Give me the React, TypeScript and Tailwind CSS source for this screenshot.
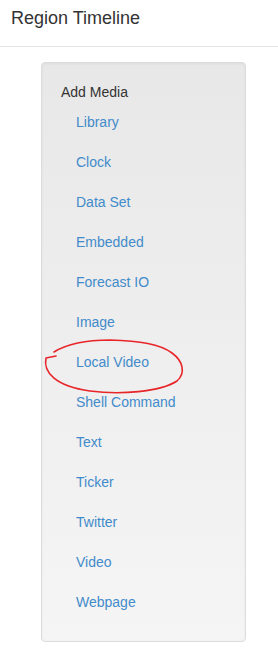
import React from "react";

const items = [
  "Library",
  "Clock",
  "Data Set",
  "Embedded",
  "Forecast IO",
  "Image",
  "Local Video",
  "Shell Command",
  "Text",
  "Ticker",
  "Twitter",
  "Video",
  "Webpage",
];

export default function App() {
  return (
    <div
      className="relative w-[278px] h-[663px] bg-white text-[#333]"
      style={{ fontFamily: '"Liberation Sans", Arial, sans-serif' }}
    >
      <div className="h-[47px] border-b border-[#e5e5e5] pl-[11px] pt-[8px]">
        <h4 className="text-[18px] leading-[20px] font-normal text-[#333]">Region Timeline</h4>
      </div>
      <div className="mt-[15px] ml-[41px] w-[205px] rounded-[4px] border border-[#dcdcdc] bg-gradient-to-b from-[#e8e8e8] to-[#f5f5f5] p-[19px] shadow-[inset_0_1px_3px_rgba(0,0,0,0.05)]">
        <div className="text-[14px] leading-[20px] text-[#333]">Add Media</div>
        <ul className="flex flex-col">
          {items.map((it) => (
            <li key={it}>
              <a className="block px-[15px] py-[10px] text-[14px] leading-[20px] text-[#428bca]" href="#">
                {it}
              </a>
            </li>
          ))}
        </ul>
      </div>
      <svg
        className="pointer-events-none absolute left-0 top-0"
        width="278"
        height="663"
        viewBox="0 0 278 663"
        fill="none"
      >
        <path
          d="M56,356 L46,358 C43,372 55,386 90,391 C120,395 160,392 177,381 C186,373 183,361 172,353 C160,344 140,341 110,340 C90,340 70,342 54,352"
          stroke="#e8262a"
          strokeWidth="1.6"
          strokeLinecap="round"
          strokeLinejoin="round"
        />
      </svg>
    </div>
  );
}
